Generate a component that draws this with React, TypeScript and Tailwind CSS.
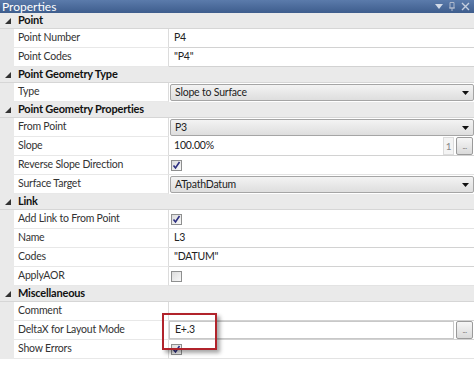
import React from "react";

type Row =
  | { kind: "cat"; label: string }
  | { kind: "text"; label: string; value: string; boxed?: boolean; dots?: boolean; spin?: boolean }
  | { kind: "combo"; label: string; value: string }
  | { kind: "check"; label: string; checked: boolean };

const rows: Row[] = [
  { kind: "cat", label: "Point" },
  { kind: "text", label: "Point Number", value: "P4" },
  { kind: "text", label: "Point Codes", value: '"P4"' },
  { kind: "cat", label: "Point Geometry Type" },
  { kind: "combo", label: "Type", value: "Slope to Surface" },
  { kind: "cat", label: "Point Geometry Properties" },
  { kind: "combo", label: "From Point", value: "P3" },
  { kind: "text", label: "Slope", value: "100.00%", spin: true, dots: true },
  { kind: "check", label: "Reverse Slope Direction", checked: true },
  { kind: "combo", label: "Surface Target", value: "ATpathDatum" },
  { kind: "cat", label: "Link" },
  { kind: "check", label: "Add Link to From Point", checked: true },
  { kind: "text", label: "Name", value: "L3" },
  { kind: "text", label: "Codes", value: '"DATUM"' },
  { kind: "check", label: "ApplyAOR", checked: false },
  { kind: "cat", label: "Miscellaneous" },
  { kind: "text", label: "Comment", value: "" },
  { kind: "text", label: "DeltaX for Layout Mode", value: "E+.3", boxed: true, dots: true },
  { kind: "check", label: "Show Errors", checked: true },
];

const Expander = () => (
  <svg width="6" height="6" viewBox="0 0 6 6" className="ml-[5px]">
    <path d="M6 0 L6 6 L0 6 Z" fill="#333" />
  </svg>
);

const DotsButton = () => (
  <div className="w-[17px] h-[18px] mr-[1px] border border-[#9a9a9a] rounded-[2px] bg-gradient-to-b from-[#f6f6f6] to-[#dadada] flex items-end justify-center pb-[4px]">
    <span className="text-[8px] leading-none text-[#777] tracking-[-0.5px]">...</span>
  </div>
);

const CheckBox = ({ checked }: { checked: boolean }) => (
  <div className="ml-[2px] w-[11px] h-[11px] border border-[#8e8f8f] bg-gradient-to-br from-[#dcdcdc] to-[#f8f8f8] flex items-center justify-center">
    {checked && (
      <svg width="9" height="9" viewBox="0 0 9 9">
        <path d="M1.5 4.5 L3.5 7 L7.5 1" fill="none" stroke="#2d2f80" strokeWidth="1.6" />
      </svg>
    )}
  </div>
);

function Value({ row }: { row: Row }) {
  if (row.kind === "combo") {
    return (
      <div className="flex-1 h-full py-[1px] pl-[1px]">
        <div className="h-full border border-[#a5a5a5] rounded-[2px] bg-gradient-to-b from-[#f3f3f3] to-[#dedede] flex items-center pl-[4px] pr-[4px]">
          <span className="flex-1">{row.value}</span>
          <svg width="7" height="4" viewBox="0 0 7 4">
            <path d="M0 0 L7 0 L3.5 4 Z" fill="#111" />
          </svg>
        </div>
      </div>
    );
  }
  if (row.kind === "check") {
    return (
      <div className="flex-1 h-full flex items-center border-b border-[#e3e3e3] bg-white">
        <CheckBox checked={row.checked} />
      </div>
    );
  }
  if (row.kind === "text") {
    return (
      <div className="flex-1 h-full flex items-center bg-white border-b border-[#d2d2d2]">
        <div
          className={
            row.boxed
              ? "flex-1 h-[18px] flex items-center pl-[5px] border border-[#c8c8c8] mr-[2px]"
              : "flex-1 flex items-center pl-[5px]"
          }
        >
          {row.value}
        </div>
        {row.spin && (
          <div className="w-[11px] h-[18px] mr-[2px] bg-[#f4f4f4] border border-[#dcdcdc] flex items-center justify-center text-[10px] text-[#888]">
            1
          </div>
        )}
        {row.dots && <DotsButton />}
      </div>
    );
  }
  return null;
}

export default function App() {
  return (
    <div
      className="relative w-[474px] h-[369px] bg-white overflow-hidden text-[10.5px] tracking-[-0.2px] text-[#222]"
      style={{ fontFamily: "Lato, 'Noto Sans', sans-serif" }}
    >
      <div className="h-[13px] bg-gradient-to-b from-[#5b7bab] to-[#3e5d8d] flex items-center pl-[2px] text-white text-[12px] leading-[13px] tracking-normal">
        <span className="flex-1">Properties</span>
        <div className="flex items-center gap-[6px] pr-[4px]">
          <svg width="8" height="5" viewBox="0 0 8 5">
            <path d="M0 0 L8 0 L4 5 Z" fill="#d2dae8" />
          </svg>
          <svg width="6" height="9" viewBox="0 0 6 9">
            <path d="M1 0.5 H5 V6 H1 Z M0 6 H6 M3 6 V9" fill="none" stroke="#aeb9cc" strokeWidth="1" />
          </svg>
          <svg width="9" height="9" viewBox="0 0 9 9">
            <path d="M1 1 L8 8 M8 1 L1 8" stroke="#c4cedf" strokeWidth="1.4" />
          </svg>
        </div>
      </div>
      <div className="flex flex-col">
        {rows.map((row, i) =>
          row.kind === "cat" ? (
            <div key={i} className="h-[16px] flex items-center bg-[#eaeaea] border-b border-[#d6d6d6]">
              <div className="w-[18px] flex items-center">
                <Expander />
              </div>
              <span className="font-bold text-[11px] text-[#111]">{row.label}</span>
            </div>
          ) : (
            <div key={i} className="h-[19px] flex items-stretch">
              <div className="w-[14px] bg-[#eaeaea]" />
              <div className="w-[155px] flex items-center pl-[4px] bg-white border-b border-[#e8e8e8] border-r border-r-[#dcdcdc] text-[#333]">
                {row.label}
              </div>
              <Value row={row} />
            </div>
          )
        )}
      </div>
      <div className="absolute left-[162px] top-[313px] w-[55px] h-[37px] border-2 border-[#b1232b] shadow-[3px_3px_4px_rgba(0,0,0,0.35)]" />
    </div>
  );
}
